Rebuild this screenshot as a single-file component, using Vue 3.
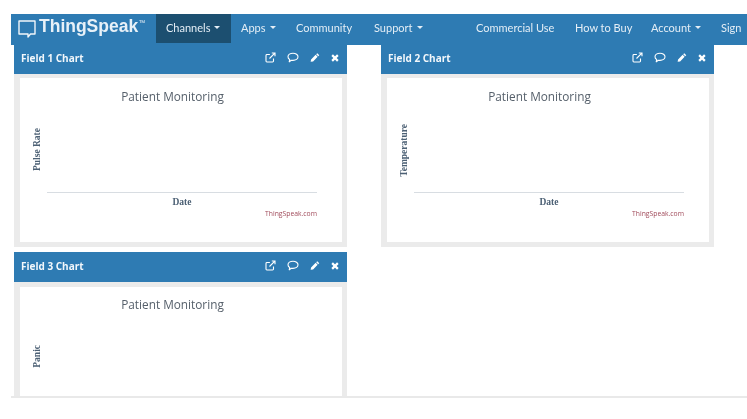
<script setup>
const leftNav = [
  { label: 'Channels', caret: true, active: true, w: 75 },
  { label: 'Apps', caret: true, w: 55 },
  { label: 'Community', w: 78 },
  { label: 'Support', caret: true, w: 102 },
]
const rightNav = [
  { label: 'Commercial Use', w: 99 },
  { label: 'How to Buy', w: 76 },
  { label: 'Account', caret: true, w: 70 },
  { label: 'Sign', w: 36 },
]
const panels = [
  { id: 1, axis: 'Pulse Rate', plot: true },
  { id: 2, axis: 'Temperature', plot: true },
  { id: 3, axis: 'Panic', plot: false },
]
</script>

<template>
  <div class="page">
    <header class="nav">
      <div class="brand">
        <svg class="logo" width="18" height="19" viewBox="0 0 18 19" fill="none" stroke="#f1f6fa" stroke-width="1.4">
          <path d="M1 1h16v13h-4.500l-2.500 3v-3H1z" stroke-linejoin="round" />
        </svg>
        <span class="brand-name">ThingSpeak</span><span class="tm">™</span>
      </div>
      <a v-for="n in leftNav" :key="n.label" class="nav-item" :class="{ active: n.active }" :style="{ width: n.w + 'px' }">
        {{ n.label }}<i v-if="n.caret" class="caret"></i>
      </a>
      <a v-for="n in rightNav" :key="n.label" class="nav-item" :style="{ width: n.w + 'px' }">
        {{ n.label }}<i v-if="n.caret" class="caret"></i>
      </a>
    </header>

    <main class="grid">
      <section v-for="p in panels" :key="p.id" class="panel" :class="{ cut: !p.plot }">
        <div class="panel-head">
          <h3>Field {{ p.id }} Chart</h3>
          <div class="tools">
            <svg width="11" height="11" viewBox="0 0 11 11" fill="none" stroke="#fff" stroke-width="1.1">
              <path d="M8.500 6.500v2.600a.9.9 0 0 1-.9.9H1.900a.9.9 0 0 1-.9-.9V3.400a.9.9 0 0 1 .9-.9h3" />
              <path d="M4.500 6.500 9.800 1.200M6.800 1h3.200v3.200" />
            </svg>
            <svg width="12" height="11" viewBox="0 0 12 11" fill="none" stroke="#fff" stroke-width="1.1">
              <path d="M6 1.200c2.800 0 5 1.600 5 3.600S8.800 8.400 6 8.400c-.6 0-1.100-.1-1.600-.2L2.200 9.800l.5-2.200C1.600 7 1 6 1 4.800c0-2 2.200-3.600 5-3.600z" stroke-linejoin="round" />
            </svg>
            <svg width="10" height="11" viewBox="0 0 11 11" fill="#fff">
              <path d="M8 .8l2.200 2.200-1.200 1.200-2.200-2.200zM6.200 2.600l2.200 2.200-5 5L.7 10.300l.5-2.700z" />
            </svg>
            <svg width="8" height="8" viewBox="0 0 9 9" fill="none" stroke="#fff" stroke-width="2.500">
              <path d="M1.300 1.300l6.400 6.400M7.700 1.300L1.300 7.700" />
            </svg>
          </div>
        </div>
        <div class="panel-body">
          <div class="chart">
            <div class="chart-title">Patient Monitoring</div>
            <div class="plot-row">
              <div class="y-label"><span>{{ p.axis }}</span></div>
              <div class="plot"></div>
            </div>
            <template v-if="p.plot">
              <div class="x-label">Date</div>
              <div class="credit">ThingSpeak.com</div>
            </template>
          </div>
        </div>
      </section>
    </main>
  </div>
</template>

<style>
html, body { margin: 0; background: #fff; }
</style>

<style scoped>
.page {
  width: 736px;
  height: 382px;
  margin: 14px 0 0 11px;
  border-bottom: 2px solid #e9e9e9;
  overflow: hidden;
  font-family: Lato, "Open Sans", sans-serif;
  filter: blur(0.4px);
}
.nav {
  display: flex;
  height: 31px;
  background: #2e7bb3;
  color: #e4eef6;
  white-space: nowrap;
}
.brand {
  display: flex;
  align-items: center;
  width: 145px;
  height: 25px;
  flex: none;
  padding-left: 7px;
  box-sizing: border-box;
}
.logo { flex: none; margin-right: 3px; margin-top: 5px; }
.brand-name {
  font: bold 17.500px "Liberation Sans", sans-serif;
  color: #e8f1f8;
}
.tm { font: 8px "Open Sans", sans-serif; align-self: flex-start; margin: 3px 0 0 1px; color: #dfeaf3; }
.nav-item {
  display: flex;
  align-items: center;
  height: 29px;
  padding: 0 0 2px 10px;
  box-sizing: border-box;
  font-size: 11px;
  flex: none;
}
.nav-item.active { background: #1c4f70; }
.caret {
  width: 0;
  height: 0;
  margin-left: 4px;
  border-left: 3px solid transparent;
  border-right: 3px solid transparent;
  border-top: 3px solid currentColor;
}
.grid {
  display: grid;
  grid-template-columns: 332.500px 332.500px;
  column-gap: 34.500px;
  row-gap: 5px;
  padding-left: 3px;
}
.panel { background: #ebebeb; height: 202px; }
.panel.cut { height: 200px; }
.panel-head {
  display: flex;
  align-items: center;
  justify-content: space-between;
  height: 29px;
  padding: 0 8px 4px 7px;
  box-sizing: border-box;
  background: #2e7bb3;
}
.panel.cut .panel-head { height: 30px; padding-bottom: 3px; }
h3 { margin: 0; font: bold 10px "Open Sans", sans-serif; color: #f2f7fb; }
.tools { display: flex; align-items: center; gap: 11px; }
.panel-body { margin: 4px 5px 5px 6px; height: 164px; background: #fff; }
.panel.cut .panel-body { height: 180px; margin-top: 5px; }
.chart { padding-left: 9px; width: 288px; }
.chart-title {
  padding-top: 10px;
  padding-right: 1px;
  text-align: center;
  font: 11.800px/17px "Open Sans", sans-serif;
  color: #56606b;
}
.panel.cut .chart-title { padding-top: 9px; }
.plot-row { display: flex; height: 88px; }
.panel.cut .plot-row { height: 84px; }
.y-label { width: 18px; padding-right: 3px; box-sizing: border-box; display: flex; align-items: center; justify-content: center; }
.y-label span {
  writing-mode: vertical-rl;
  transform: translateY(1px) rotate(180deg);
  font: bold 9.500px "Liberation Serif", serif;
  color: #4d6175;
  white-space: nowrap;
}
.plot { flex: 1; border-bottom: 1px solid #d8dde2; }
.x-label {
  margin: 2px 0 0 18px;
  text-align: center;
  font: bold 9.500px/14px "Liberation Serif", serif;
  color: #4d6175;
}
.credit {
  text-align: right;
  font: 6.800px/10px "Open Sans", sans-serif;
  color: #a04a5a;
}
</style>
